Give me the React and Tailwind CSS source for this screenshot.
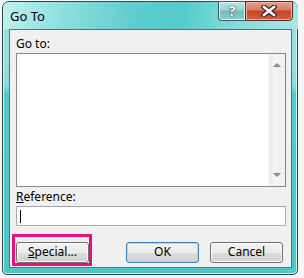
import React from "react";

const font = { fontFamily: '"Noto Sans", "Open Sans", Arial, sans-serif' };

function WinButton({ children, primary }) {
  return (
    <button
      className={`h-[21px] w-[73px] rounded-[3px] border text-[12px] leading-none text-black ${
        primary
          ? "border-[#3c7fb1] shadow-[inset_0_0_0_1px_#a9dcf6]"
          : "border-[#707070] shadow-[inset_0_0_0_1px_#fcfcfc]"
      } bg-[linear-gradient(180deg,#f2f2f2_0%,#ebebeb_50%,#dddddd_51%,#cfcfcf_100%)]`}
    >
      {children}
    </button>
  );
}

export default function App() {
  return (
    <div className="w-[304px] h-[278px] bg-[#f6f6f6] pl-[2px] pt-[1px]" style={font}>
      {/* window frame */}
      <div className="w-[296px] h-[274px] flex flex-col border border-[#34474b] rounded-t-[7px] rounded-b-[5px] pl-[6px] pr-[5px] pb-[6px] bg-[linear-gradient(180deg,#9fe3e3_0%,#8edede_30%,#55caca_34%,#4ec6c6_100%)] shadow-[inset_0_0_0_1px_#c9f2f2]">
        {/* title bar */}
        <div className="h-[27px] flex items-start justify-between -mx-[6px] px-[6px] rounded-t-[6px] bg-[linear-gradient(100deg,#c2f0f0_0%,#8fdfdf_20%,#5ecdcd_45%,#55caca_60%,#86dddd_80%,#a9e8e8_100%)]">
          <span className="pt-[6px] pl-[1px] text-[13px] text-black leading-[16px]">Go To</span>
          <div className="flex -mt-[1px] -mr-[1px]">
            <div className="w-[27px] h-[20px] flex items-center justify-center border border-[#3b5a5e] border-r-0 rounded-bl-[4px] bg-[linear-gradient(180deg,#b9e6e6_0%,#95d4d4_45%,#6fbaba_50%,#8ccfcf_100%)] shadow-[inset_0_0_0_1px_#d8f4f4]">
              <span className="text-[14px] font-bold text-white leading-none [text-shadow:0_0_1px_#2a3a3a,0_0_1px_#2a3a3a,0_0_1px_#2a3a3a]">?</span>
            </div>
            <div className="w-[48px] h-[20px] flex items-center justify-center border border-[#5b2a22] rounded-br-[4px] bg-[linear-gradient(180deg,#e8a090_0%,#d97a62_45%,#c1452b_50%,#d0603f_100%)] shadow-[inset_0_0_0_1px_#efb2a2]">
              <svg width="16" height="12" viewBox="0 0 16 12">
                <path d="M3 2 L13 10 M13 2 L3 10" stroke="#3a2420" strokeWidth="5" strokeLinecap="square" />
                <path d="M3 2 L13 10 M13 2 L3 10" stroke="#ffffff" strokeWidth="2.6" strokeLinecap="square" />
              </svg>
            </div>
          </div>
        </div>

        {/* client area */}
        <div className="flex-1 border border-[#587074] bg-[#f0f0f0] pl-[6px] pr-[5px] flex flex-col">
          <div className="pt-[6px] text-[12px] leading-[15px] text-black">Go to:</div>
          <div className="mt-[2px] h-[134px] flex border border-[#828790] bg-white">
            <div className="flex-1" />
            <div className="w-[17px] flex flex-col justify-between items-center py-[8px] bg-[linear-gradient(90deg,#ececec_0%,#f4f4f4_40%,#efefef_100%)] border-l border-[#f7f7f7]">
              <svg width="8" height="5" viewBox="0 0 8 5">
                <path d="M0 5 L4 1 L8 5 Z" fill="#8a8a8a" />
              </svg>
              <svg width="8" height="5" viewBox="0 0 8 5">
                <path d="M0 0 L4 4 L8 0 Z" fill="#8a8a8a" />
              </svg>
            </div>
          </div>
          <div className="mt-[2px] text-[12px] leading-[15px] text-black">
            <span className="underline">R</span>eference:
          </div>
          <div className="mt-[2px] h-[20px] flex items-center border border-[#abadb3] border-t-[#a0a3aa] bg-white pl-[3px]">
            <div className="w-px h-[13px] bg-black" />
          </div>
          <div className="mt-[12px] flex">
            <div className="relative">
              <WinButton>
                <span className="underline">S</span>pecial...
              </WinButton>
              <div className="absolute -left-[4px] -top-[4px] -right-[3px] -bottom-[3px] border-[3px] border-[#ea0f7d]" />
            </div>
            <div className="ml-[37px]">
              <WinButton primary>OK</WinButton>
            </div>
            <div className="ml-[11px]">
              <WinButton>Cancel</WinButton>
            </div>
          </div>
        </div>
      </div>
    </div>
  );
}
